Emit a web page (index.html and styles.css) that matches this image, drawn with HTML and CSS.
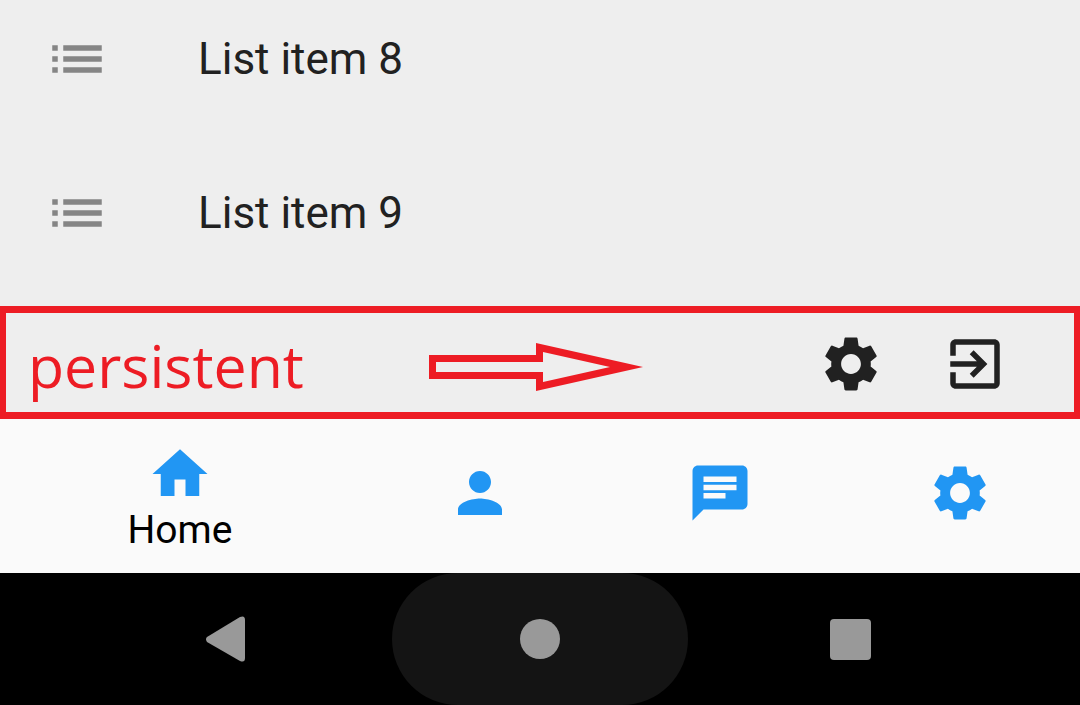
FILE: index.html
```html
<!DOCTYPE html>
<html lang="en">
<head>
<meta charset="UTF-8">
<meta name="viewport" content="width=device-width, initial-scale=1.0">
<title>Persistent Footer Buttons</title>
<link rel="stylesheet" href="styles.css">
</head>
<body>

<main class="content">
    <ul class="list">
        <li class="list-item">
            <svg class="icon" viewBox="0 0 24 24" aria-hidden="true"><path d="M3 13h2v-2H3v2zm0 4h2v-2H3v2zm0-8h2V7H3v2zm4 4h14v-2H7v2zm0 4h14v-2H7v2zM7 7v2h14V7H7z"/></svg>
            <span>List item 8</span>
        </li>
        <li class="list-item">
            <svg class="icon" viewBox="0 0 24 24" aria-hidden="true"><path d="M3 13h2v-2H3v2zm0 4h2v-2H3v2zm0-8h2V7H3v2zm4 4h14v-2H7v2zm0 4h14v-2H7v2zM7 7v2h14V7H7z"/></svg>
            <span>List item 9</span>
        </li>
    </ul>
</main>

<!-- Persistent footer -->
<section class="persistent">
    <span class="persistent-label">persistent</span>
    <svg class="arrow" viewBox="0 0 214 48" aria-hidden="true"><path fill-rule="evenodd" d="M0 12H107V0L214 24L107 48V36H0zM7 19V29H114V39L181 24L114 9V19z"/></svg>
    <div class="persistent-actions">
        <button type="button" class="button" aria-label="Settings">
            <svg class="icon" viewBox="0 0 24 24"><path d="M19.14 12.94c.04-.3.06-.61.06-.94 0-.32-.02-.64-.07-.94l2.03-1.58c.18-.14.23-.41.12-.61l-1.92-3.32c-.12-.22-.37-.29-.59-.22l-2.39.96c-.5-.38-1.03-.7-1.62-.94l-.36-2.54c-.04-.24-.24-.41-.48-.41h-3.84c-.24 0-.43.17-.47.41l-.36 2.54c-.59.24-1.13.57-1.62.94l-2.39-.96c-.22-.08-.47 0-.59.22L2.74 8.87c-.12.21-.08.47.12.61l2.03 1.58c-.05.3-.09.63-.09.94s.02.64.07.94l-2.03 1.58c-.18.14-.23.41-.12.61l1.92 3.32c.12.22.37.29.59.22l2.39-.96c.5.38 1.03.7 1.62.94l.36 2.54c.05.24.24.41.48.41h3.84c.24 0 .44-.17.47-.41l.36-2.54c.59-.24 1.13-.56 1.62-.94l2.39.96c.22.08.47 0 .59-.22l1.92-3.32c.12-.22.07-.47-.12-.61l-2.01-1.58zM12 15.6c-1.98 0-3.6-1.62-3.6-3.6s1.62-3.6 3.6-3.6 3.6 1.62 3.6 3.6-1.62 3.6-3.6 3.6z"/></svg>
        </button>
        <button type="button" class="button" aria-label="Exit">
            <svg class="icon" viewBox="0 0 24 24"><path d="M10.09 15.59L11.5 17l5-5-5-5-1.41 1.41L12.67 11H3v2h9.67l-2.58 2.59zM19 3H5c-1.11 0-2 .9-2 2v4h2V5h14v14H5v-4H3v4c0 1.1.89 2 2 2h14c1.1 0 2-.9 2-2V5c0-1.1-.9-2-2-2z"/></svg>
        </button>
    </div>
</section>

<!-- Bottom navigation -->
<nav class="bottom-nav">
    <a href="#" class="nav-item active">
        <svg class="icon" viewBox="0 0 24 24" aria-hidden="true"><path d="M10 20v-6h4v6h5v-8h3L12 3 2 12h3v8z"/></svg>
        <span class="nav-label">Home</span>
    </a>
    <a href="#" class="nav-item" aria-label="Profile">
        <svg class="icon" viewBox="0 0 24 24"><path d="M12 12c2.21 0 4-1.79 4-4s-1.79-4-4-4-4 1.79-4 4 1.79 4 4 4zm0 2c-2.67 0-8 1.34-8 4v2h16v-2c0-2.66-5.33-4-8-4z"/></svg>
    </a>
    <a href="#" class="nav-item" aria-label="Messages">
        <svg class="icon" viewBox="0 0 24 24"><path d="M20 2H4c-1.1 0-1.99.9-1.99 2L2 22l4-4h14c1.1 0 2-.9 2-2V4c0-1.1-.9-2-2-2zM6 9h12v2H6V9zm8 5H6v-2h8v2zm4-6H6V6h12v2z"/></svg>
    </a>
    <a href="#" class="nav-item" aria-label="Settings">
        <svg class="icon" viewBox="0 0 24 24"><path d="M19.14 12.94c.04-.3.06-.61.06-.94 0-.32-.02-.64-.07-.94l2.03-1.58c.18-.14.23-.41.12-.61l-1.92-3.32c-.12-.22-.37-.29-.59-.22l-2.39.96c-.5-.38-1.03-.7-1.62-.94l-.36-2.54c-.04-.24-.24-.41-.48-.41h-3.84c-.24 0-.43.17-.47.41l-.36 2.54c-.59.24-1.13.57-1.62.94l-2.39-.96c-.22-.08-.47 0-.59.22L2.74 8.87c-.12.21-.08.47.12.61l2.03 1.58c-.05.3-.09.63-.09.94s.02.64.07.94l-2.03 1.58c-.18.14-.23.41-.12.61l1.92 3.32c.12.22.37.29.59.22l2.39-.96c.5.38 1.03.7 1.62.94l.36 2.54c.05.24.24.41.48.41h3.84c.24 0 .44-.17.47-.41l.36-2.54c.59-.24 1.13-.56 1.62-.94l2.39.96c.22.08.47 0 .59-.22l1.92-3.32c.12-.22.07-.47-.12-.61l-2.01-1.58zM12 15.6c-1.98 0-3.6-1.62-3.6-3.6s1.62-3.6 3.6-3.6 3.6 1.62 3.6 3.6-1.62 3.6-3.6 3.6z"/></svg>
    </a>
</nav>

<!-- System buttons -->
<footer class="system-bar">
    <button type="button" class="system-button" aria-label="Back">
        <svg class="system-icon" viewBox="0 0 48 48"><path d="M1 22L34 2Q39 0 39 5V43Q39 48 34 46L1 27Q-1 24 1 22z"/></svg>
    </button>
    <button type="button" class="system-button pressed" aria-label="Home">
        <svg class="system-icon" viewBox="0 0 48 48"><circle cx="24" cy="24" r="20"/></svg>
    </button>
    <button type="button" class="system-button" aria-label="Recent apps">
        <svg class="system-icon" viewBox="0 0 48 48"><rect x="4" y="4" width="41" height="41" rx="4"/></svg>
    </button>
</footer>

</body>
</html>
```
FILE: styles.css
```css
* {
    box-sizing: border-box;
}
body {
    display: flex;
    flex-direction: column;
    height: 100vh;
    margin: 0;
    font-family: Roboto, sans-serif;
    background-color: #eee;
    color: #212121;
}
button {
    padding: 0;
    border: 0;
    background: none;
    color: inherit;
    cursor: pointer;
}
.icon {
    display: block;
    width: 66px;
    height: 66px;
    fill: currentColor;
}
.content {
    display: flex;
    flex: 1;
    flex-direction: column;
    justify-content: flex-end;
    min-height: 0;
    overflow: hidden;
}
.list {
    margin: 0;
    padding: 0 0 16px;
    list-style: none;
}
.list-item {
    display: flex;
    align-items: center;
    gap: 88px;
    height: 154px;
    padding: 0 44px;
    font-size: 44px;
}
.list-item .icon {
    color: #858585;
}
.persistent {
    display: flex;
    align-items: center;
    padding: 2px 66px 0 22px;
    border: solid #ed1c24;
    border-width: 7px 6px;
    color: #ed1c24;
}
.persistent-label {
    flex: 0 0 401px;
    padding-top: 4px;
    font-family: "Open Sans", sans-serif;
    font-size: 59px;
    line-height: 93px;
}
.arrow {
    width: 214px;
    height: 48px;
    margin-top: 6px;
    fill: currentColor;
}
.persistent-actions {
    display: flex;
    gap: 58px;
    margin-left: auto;
    color: #212121;
}
.bottom-nav {
    display: flex;
    background-color: #fafafa;
}
.nav-item {
    display: flex;
    flex: 2;
    flex-direction: column;
    align-items: center;
    justify-content: center;
    height: 154px;
    padding-bottom: 6px;
    color: #2196f3;
    text-decoration: none;
}
.nav-item.active {
    flex: 3;
    padding: 2px 0 0;
}
.nav-label {
    color: #000;
    font-size: 39px;
    line-height: 46px;
}
.system-bar {
    display: flex;
    justify-content: center;
    gap: 14px;
    background-color: #000;
}
.system-button {
    display: flex;
    align-items: center;
    justify-content: center;
    width: 296px;
    height: 132px;
    border-radius: 66px;
}
.system-button.pressed {
    background-color: #141414;
}
.system-icon {
    width: 48px;
    height: 48px;
    fill: #999;
}
```
